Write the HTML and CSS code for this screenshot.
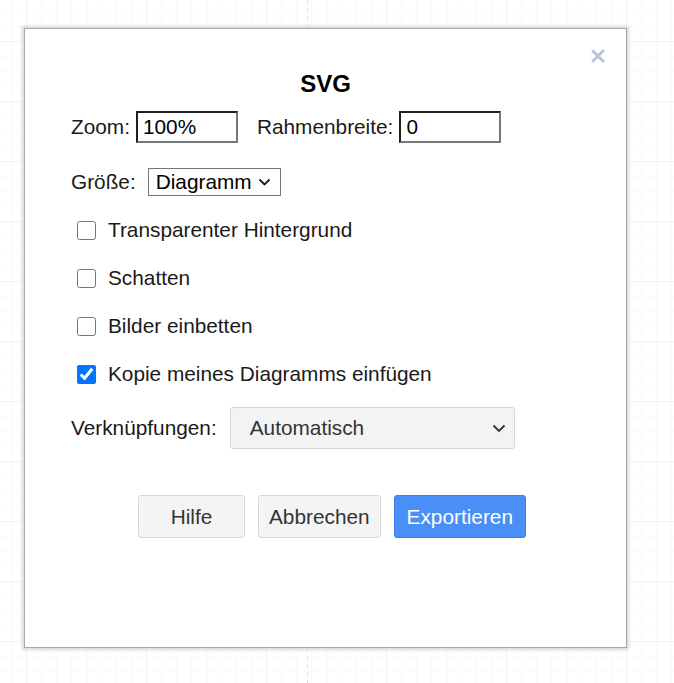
FILE: index.html
```html
<!DOCTYPE html>
<html lang="de">
<head>
<meta charset="utf-8">
<title>SVG</title>
<link rel="stylesheet" href="styles.css">
</head>
<body>
<div class="canvas">
  <div class="page-break"></div>
  <div class="dialog">
    <svg class="close" width="14" height="14" viewBox="0 0 14 14" aria-label="Schließen">
      <path d="M2 2 L12 12 M12 2 L2 12" stroke="#b6c6da" stroke-width="3" stroke-linecap="round"/>
    </svg>
    <h1 class="title">SVG</h1>
    <div class="row row-inputs">
      <span class="label">Zoom:</span>
      <input class="field" type="text" value="100%">
      <span class="label label-gap">Rahmenbreite:</span>
      <input class="field" type="text" value="0">
    </div>
    <div class="row row-size">
      <span class="label">Größe:</span>
      <div class="select-small">
        <span>Diagramm</span>
        <svg width="13" height="8" viewBox="0 0 13 8"><path d="M1.5 1.5 L6.5 6.5 L11.5 1.5" fill="none" stroke="#1a1a1a" stroke-width="1.8"/></svg>
      </div>
    </div>
    <label class="check-row"><input type="checkbox"><span>Transparenter Hintergrund</span></label>
    <label class="check-row"><input type="checkbox"><span>Schatten</span></label>
    <label class="check-row"><input type="checkbox"><span>Bilder einbetten</span></label>
    <label class="check-row"><input type="checkbox" checked><span>Kopie meines Diagramms einfügen</span></label>
    <div class="row row-links">
      <span class="label">Verknüpfungen:</span>
      <div class="select-large">
        <span>Automatisch</span>
        <svg width="14" height="9" viewBox="0 0 14 9"><path d="M1.5 1.5 L7 7 L12.5 1.5" fill="none" stroke="#333" stroke-width="1.8"/></svg>
      </div>
    </div>
    <div class="buttons">
      <button class="btn">Hilfe</button>
      <button class="btn">Abbrechen</button>
      <button class="btn btn-primary">Exportieren</button>
    </div>
  </div>
</div>
</body>
</html>
```
FILE: styles.css
```css
html, body {
  margin: 0;
  padding: 0;
  height: 100%;
}
body {
  font-family: "Liberation Sans", Arial, sans-serif;
  color: #1a1a1a;
  background-color: #fff;
  background-image:
    linear-gradient(to right, #f2f2f2 1px, transparent 1px),
    linear-gradient(to bottom, #f2f2f2 1px, transparent 1px),
    linear-gradient(to right, #f9f9f9 1px, transparent 1px),
    linear-gradient(to bottom, #f9f9f9 1px, transparent 1px);
  background-size: 60px 60px, 60px 60px, 15px 15px, 15px 15px;
  background-position: 26px 0, 0 41px, 11px 0, 0 11px;
  overflow: hidden;
}
.canvas {
  position: relative;
  width: 674px;
  height: 683px;
}
.page-break {
  position: absolute;
  left: 307px;
  top: 0;
  width: 1px;
  height: 100%;
  background: repeating-linear-gradient(to bottom, #e2e2e2 0 4px, transparent 4px 8px);
}
.dialog {
  position: absolute;
  left: 24px;
  top: 28px;
  width: 603px;
  height: 620px;
  box-sizing: border-box;
  background: #fff;
  border: 1px solid #a8a8a8;
  box-shadow: 0 0 3px 2px #d9d9d9;
  padding: 41px 0 0 46px;
  display: flex;
  flex-direction: column;
  align-items: flex-start;
}
.close {
  position: absolute;
  left: 566px;
  top: 20px;
}
.title {
  align-self: stretch;
  margin: 0 0 13px -46px;
  font-size: 24px;
  line-height: 28px;
  font-weight: bold;
  text-align: center;
  color: #000;
}
.row {
  display: flex;
  align-items: center;
  font-size: 20.8px;
}
.label {
  white-space: nowrap;
}
.row-inputs {
  height: 32px;
}
.row-inputs .label {
  margin-right: 6px;
}
.label-gap {
  margin-left: 19px;
}
.field {
  box-sizing: border-box;
  width: 102px;
  height: 32px;
  margin: 0;
  padding: 0 0 0 5px;
  border-style: solid;
  border-width: 2px;
  border-color: #1f1f1f #777 #777 #1f1f1f;
  font-family: "Liberation Sans", Arial, sans-serif;
  font-size: 20.8px;
  color: #000;
  background: #fff;
  outline: none;
}
.row-size {
  margin-top: 25px;
  height: 28px;
}
.row-size .label {
  margin-right: 12px;
}
.select-small {
  box-sizing: border-box;
  width: 133px;
  height: 28px;
  border: 1px solid #767676;
  display: flex;
  align-items: center;
  justify-content: space-between;
  padding: 0 9px 0 7px;
  color: #000;
  font-size: 20.8px;
}
.check-row {
  display: flex;
  align-items: center;
  height: 48px;
  font-size: 20.8px;
  padding-left: 6px;
}
.row-size + .check-row {
  margin-top: 10px;
}
.check-row input {
  width: 19px;
  height: 19px;
  margin: 0 12px 0 0;
}
.row-links {
  margin-top: 9px;
  height: 42px;
}
.row-links .label {
  margin-right: 13px;
}
.select-large {
  box-sizing: border-box;
  width: 285px;
  height: 42px;
  background: #f3f3f3;
  border: 1px solid #d6d6d6;
  border-radius: 3px;
  display: flex;
  align-items: center;
  justify-content: space-between;
  padding: 0 8px 0 19px;
  color: #333;
  font-size: 20.8px;
}
.buttons {
  display: flex;
  gap: 13px;
  margin: 46px 0 0 67px;
}
.btn {
  box-sizing: border-box;
  min-width: 107px;
  height: 43px;
  padding: 0 10px;
  background: #f4f4f4;
  border: 1px solid #d8d8d8;
  border-radius: 3px;
  font-family: "Liberation Sans", Arial, sans-serif;
  font-size: 20.8px;
  color: #333;
}
.btn-primary {
  background: #4a8ff8;
  border-color: #3d7fe8;
  color: #fff;
  padding: 0 12px;
}
```
